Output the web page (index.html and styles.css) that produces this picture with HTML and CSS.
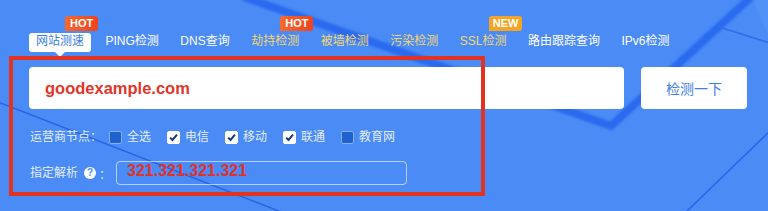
FILE: index.html
```html
<!DOCTYPE html>
<html lang="zh-CN">
<head>
<meta charset="utf-8">
<title>网站测速</title>
<link rel="stylesheet" href="styles.css">
</head>
<body>
<div class="page">
  <svg class="bg" width="768" height="211" viewBox="0 0 768 211" aria-hidden="true">
    <defs>
      <filter id="soft" x="-10%" y="-10%" width="120%" height="120%"><feGaussianBlur stdDeviation="1.3"/></filter>
    </defs>
    <polygon points="752,-2 770,-2 770,40" fill="#5092f6"/>
    <polyline points="244,-3 611,126 751,-3" fill="none" stroke="#2c6bef" stroke-width="8" stroke-linejoin="miter" filter="url(#soft)"/>
    <line x1="-2" y1="102" x2="284" y2="213" stroke="#2762e2" stroke-width="1.4"/>
    <line x1="719" y1="27" x2="770" y2="43" stroke="#2f6cec" stroke-width="1.6"/>
    <line x1="770" y1="131" x2="685" y2="213" stroke="#2a66ea" stroke-width="1.6"/>
  </svg>

  <div class="panel">
    <nav class="tabs">
      <span class="tab active">网站测速<span class="badge hot">HOT</span></span>
      <span class="tab">PING检测</span>
      <span class="tab">DNS查询</span>
      <span class="tab warn">劫持检测<span class="badge hot">HOT</span></span>
      <span class="tab warn">被墙检测</span>
      <span class="tab warn">污染检测</span>
      <span class="tab warn">SSL检测<span class="badge new">NEW</span></span>
      <span class="tab">路由跟踪查询</span>
      <span class="tab">IPv6检测</span>
    </nav>

    <div class="search">
      <div class="input">goodexample.com</div>
      <button class="btn">检测一下</button>
    </div>

    <div class="opts">
      <span class="label">运营商节点：</span>
      <span class="cb"><span class="box"></span>全选</span>
      <span class="cb"><span class="box on"><svg width="11" height="11" viewBox="0 0 11 11"><path d="M2.2 5.6 L4.5 8 L9 2.6" fill="none" stroke="#17397a" stroke-width="2"/></svg></span>电信</span>
      <span class="cb"><span class="box on"><svg width="11" height="11" viewBox="0 0 11 11"><path d="M2.2 5.6 L4.5 8 L9 2.6" fill="none" stroke="#17397a" stroke-width="2"/></svg></span>移动</span>
      <span class="cb"><span class="box on"><svg width="11" height="11" viewBox="0 0 11 11"><path d="M2.2 5.6 L4.5 8 L9 2.6" fill="none" stroke="#17397a" stroke-width="2"/></svg></span>联通</span>
      <span class="cb"><span class="box"></span>教育网</span>
    </div>

    <div class="resolve">
      <span class="label">指定解析</span>
      <span class="help">?</span>
      <span class="colon">：</span>
      <div class="ipbox"><span class="ip">321.321.321.321</span></div>
    </div>
  </div>

  <div class="annot"></div>
</div>
</body>
</html>
```

FILE: styles.css
```css
html, body {
  margin: 0;
  padding: 0;
}
body {
  width: 768px;
  height: 211px;
  overflow: hidden;
  background: #4a8bf5;
  font-family: "Liberation Sans", "Noto Sans CJK SC", sans-serif;
}
.page {
  position: relative;
  width: 768px;
  height: 211px;
  overflow: hidden;
  background: #4a8bf5;
}
.bg {
  position: absolute;
  left: 0;
  top: 0;
}
.panel {
  position: relative;
  padding: 33px 0 0 29px;
}

/* tabs */
.tabs {
  display: flex;
  align-items: flex-start;
  height: 19px;
}
.tab {
  position: relative;
  display: block;
  height: 19px;
  padding: 0 7px;
  margin-right: 7.5px;
  font-size: 12px;
  line-height: 17px;
  color: #ffffff;
  white-space: nowrap;
}
.tab.active {
  background: #ffffff;
  color: #3a7ee6;
  border-radius: 3px;
}
.tab.active::after {
  content: "";
  position: absolute;
  left: 50%;
  bottom: -5px;
  margin-left: -5px;
  border-left: 5px solid transparent;
  border-right: 5px solid transparent;
  border-top: 5px solid #ffffff;
}
.tab.warn {
  color: #f2d670;
}
.badge {
  position: absolute;
  left: 36px;
  top: -17px;
  height: 15px;
  padding: 0 5px;
  font-family: "Liberation Sans", sans-serif;
  font-size: 11px;
  font-weight: bold;
  line-height: 15px;
  color: #ffffff;
  border-radius: 3px 3px 3px 0;
}
.badge.hot {
  background: linear-gradient(90deg, #f66a2c, #ee4220);
}
.badge.new {
  padding: 0 4px;
  background: #f5a524;
}

/* search */
.search {
  display: flex;
  margin-top: 15px;
  height: 42px;
}
.input {
  width: 595px;
  height: 42px;
  box-sizing: border-box;
  padding-left: 16px;
  background: #ffffff;
  border-radius: 4px;
  font-size: 16.5px;
  font-weight: bold;
  line-height: 42px;
  color: #e2352a;
}
.btn {
  width: 106px;
  height: 42px;
  margin-left: 17px;
  padding: 0;
  border: none;
  border-radius: 4px;
  background: #ffffff;
  font-family: "Liberation Sans", "Noto Sans CJK SC", sans-serif;
  font-size: 14px;
  color: #3c80e4;
}

/* options */
.opts {
  display: flex;
  align-items: center;
  height: 20px;
  margin-top: 18px;
  padding-left: 1px;
  font-size: 12px;
  color: #e3ecfc;
}
.label {
  font-size: 12px;
  line-height: 20px;
  color: #e3ecfc;
}
.opts .label {
  margin-right: 7px;
}
.cb {
  display: flex;
  align-items: center;
  gap: 5px;
  margin-right: 16px;
  line-height: 20px;
}
.box {
  display: flex;
  align-items: center;
  justify-content: center;
  width: 13px;
  height: 13px;
  box-sizing: border-box;
  border: 1px solid #86aef0;
  border-radius: 2px;
  background: #1f62cf;
}
.box.on {
  background: #ffffff;
  border-color: #ffffff;
}

/* resolve */
.resolve {
  display: flex;
  align-items: center;
  height: 24px;
  margin-top: 14px;
  padding-left: 1px;
}
.help {
  display: flex;
  align-items: center;
  justify-content: center;
  width: 12px;
  height: 12px;
  margin-left: 6px;
  border-radius: 50%;
  background: #ffffff;
  color: #4a8bf5;
  font-size: 10px;
  font-weight: bold;
  line-height: 12px;
}
.colon {
  width: 12px;
  margin-left: 3px;
  font-size: 12px;
  color: #e3ecfc;
}
.ipbox {
  display: flex;
  align-items: flex-start;
  width: 291px;
  height: 24px;
  box-sizing: border-box;
  margin-left: 5px;
  padding-left: 10px;
  border: 1px solid rgba(255, 255, 255, 0.6);
  border-radius: 4px;
}
.ip {
  font-size: 16px;
  font-weight: bold;
  line-height: 17px;
  color: #e0322a;
}

/* red annotation frame over the form */
.annot {
  position: absolute;
  left: 9px;
  top: 56px;
  width: 476px;
  height: 140px;
  box-sizing: border-box;
  border: 4px solid #e3321f;
}
```
